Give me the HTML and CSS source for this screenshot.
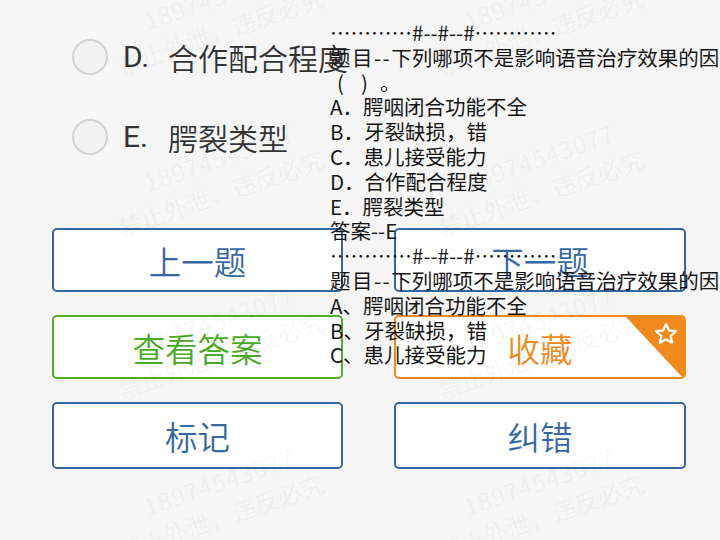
FILE: index.html
```html
<!DOCTYPE html>
<html lang="zh">
<head>
<meta charset="utf-8">
<link rel="stylesheet" href="styles.css">
</head>
<body>
<div class="page">
  <div class="options">
    <div class="option"><span class="radio"></span><span class="label"><span class="letter">D.</span>合作配合程度</span></div>
    <div class="option"><span class="radio"></span><span class="label"><span class="letter">E.</span>腭裂类型</span></div>
  </div>
  <div class="actions">
    <button class="btn btn-blue">上一题</button>
    <button class="btn btn-blue">下一题</button>
    <button class="btn btn-green">查看答案</button>
    <button class="btn btn-orange">收藏<span class="corner"><svg class="star" viewBox="0 0 24 24" width="26" height="26"><path d="M12 2.8l2.7 5.9 6.4.7-4.8 4.4 1.4 6.3L12 16.9l-5.7 3.2 1.4-6.3-4.8-4.4 6.4-.7z" fill="none" stroke="#fff" stroke-width="2" stroke-linejoin="round"/></svg></span></button>
    <button class="btn btn-blue btn-tall">标记</button>
    <button class="btn btn-blue btn-tall">纠错</button>
  </div>
</div>
<div class="ocr">
  <div>…………#--#--#…………</div>
  <div><span class="head">题目--</span>下列哪项不是影响语音治疗效果的因素</div>
  <div class="paren"><span class="po">(</span><span class="pc">)</span>。</div>
  <div>A．腭咽闭合功能不全</div>
  <div>B．牙裂缺损，错</div>
  <div>C．患儿接受能力</div>
  <div>D．合作配合程度</div>
  <div>E．腭裂类型</div>
  <div>答案--E</div>
  <div>…………#--#--#…………</div>
  <div><span class="head">题目--</span>下列哪项不是影响语音治疗效果的因素</div>
  <div>A、腭咽闭合功能不全</div>
  <div>B、牙裂缺损，错</div>
  <div>C、患儿接受能力</div>
</div>
<div class="watermarks">
  <div class="wm"><span>18974543077</span><span>禁止外泄，违反必究</span></div>
  <div class="wm"><span>18974543077</span><span>禁止外泄，违反必究</span></div>
  <div class="wm"><span>18974543077</span><span>禁止外泄，违反必究</span></div>
  <div class="wm"><span>18974543077</span><span>禁止外泄，违反必究</span></div>
  <div class="wm"><span>18974543077</span><span>禁止外泄，违反必究</span></div>
  <div class="wm"><span>18974543077</span><span>禁止外泄，违反必究</span></div>
  <div class="wm"><span>18974543077</span><span>禁止外泄，违反必究</span></div>
  <div class="wm"><span>18974543077</span><span>禁止外泄，违反必究</span></div>
</div>
</body>
</html>
```

FILE: styles.css
```css
html, body {
  margin: 0;
  padding: 0;
  width: 720px;
  height: 540px;
  overflow: hidden;
  background: #f6f6f6;
  font-family: "Noto Sans CJK SC", "Noto Sans", sans-serif;
}
.page {
  padding: 17px 34px 0 52px;
}
.options {
  display: flex;
  flex-direction: column;
}
.option {
  height: 80px;
  display: flex;
  align-items: center;
  padding-left: 20px;
}
.radio {
  width: 32px;
  height: 32px;
  border: 2.5px solid #d2d2d2;
  border-radius: 50%;
  background: #f2f2f2;
  flex: none;
}
.label {
  margin-left: 15px;
  font-size: 30px;
  font-weight: 350;
  color: #333;
  line-height: 40px;
  display: flex;
}
.letter {
  width: 45px;
  font-family: Roboto, "Noto Sans", sans-serif;
  font-weight: 400;
  color: #333;
}
.actions {
  margin-top: 51px;
  display: grid;
  grid-template-columns: 291px 292px;
  column-gap: 51px;
  row-gap: 23px;
}
.btn {
  position: relative;
  height: 64px;
  background: #fff;
  border: 2px solid #3366a2;
  border-radius: 5px;
  font-family: "Noto Sans CJK SC", sans-serif;
  font-size: 32.5px;
  font-weight: 350;
  color: #3668a4;
  padding: 0;
  overflow: hidden;
}
.btn-tall {
  height: 67px;
}
.btn-green {
  border-color: #4fae2c;
  color: #4aab27;
}
.btn-orange {
  border-color: #f08a1d;
  color: #f08a1d;
}
.corner {
  position: absolute;
  top: 0;
  right: 0;
  width: 58px;
  height: 62px;
  background: #f08a1d;
  clip-path: polygon(0 0, 100% 0, 100% 100%);
}
.star {
  position: absolute;
  top: 4px;
  right: 5px;
}
.ocr {
  position: absolute;
  left: 330px;
  top: 20px;
  right: 0;
  overflow: hidden;
  font-size: 20.5px;
  line-height: 24.8px;
  color: #151515;
  white-space: nowrap;
}
.head {
  letter-spacing: 1.5px;
}
.paren {
  padding-left: 7px;
}
.po {
  margin-right: 17px;
}
.pc {
  margin-right: 12px;
}
.watermarks {
  position: absolute;
  left: 55px;
  top: -66px;
  width: 665px;
  height: 606px;
  overflow: hidden;
  display: grid;
  grid-template-columns: 320px 320px;
  grid-auto-rows: 162px;
  pointer-events: none;
}
.wm {
  display: flex;
  flex-direction: column;
  align-items: center;
  justify-content: center;
  transform: rotate(-19deg);
  font-size: 24px;
  line-height: 34px;
  color: rgba(0, 0, 0, 0.055);
  white-space: nowrap;
}
.wm span:first-child {
  margin-left: 20px;
  letter-spacing: 1px;
}
```
